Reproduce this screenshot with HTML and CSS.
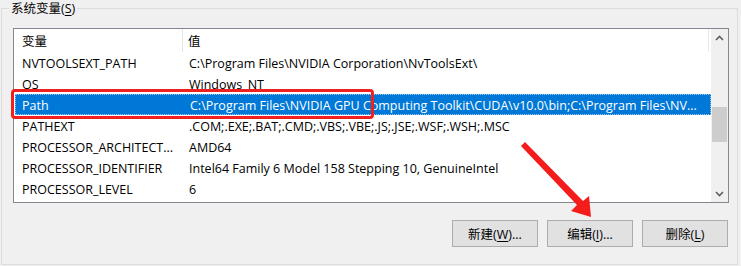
FILE: index.html
```html
<!DOCTYPE html>
<html lang="zh-CN">
<head>
    <meta charset="UTF-8">
    <title>系统变量</title>
    <link rel="stylesheet" href="styles.css">
</head>
<body>
    <div class="group">
        <span class="group-title">系统变量(<u>S</u>)</span>

        <div class="list">
            <div class="list-body">
                <div class="row head">
                    <div class="cell name">变量</div>
                    <div class="cell value">值</div>
                </div>
                <div class="row">
                    <div class="cell name">NVTOOLSEXT_PATH</div>
                    <div class="cell value">C:\Program Files\NVIDIA Corporation\NvToolsExt\</div>
                </div>
                <div class="row">
                    <div class="cell name">OS</div>
                    <div class="cell value">Windows_NT</div>
                </div>
                <div class="row selected">
                    <div class="cell name">Path</div>
                    <div class="cell value">C:\Program Files\NVIDIA GPU Computing Toolkit\CUDA\v10.0\bin;C:\Program Files\NV...</div>
                </div>
                <div class="row">
                    <div class="cell name">PATHEXT</div>
                    <div class="cell value">.COM;.EXE;.BAT;.CMD;.VBS;.VBE;.JS;.JSE;.WSF;.WSH;.MSC</div>
                </div>
                <div class="row">
                    <div class="cell name">PROCESSOR_ARCHITECT...</div>
                    <div class="cell value">AMD64</div>
                </div>
                <div class="row">
                    <div class="cell name">PROCESSOR_IDENTIFIER</div>
                    <div class="cell value">Intel64 Family 6 Model 158 Stepping 10, GenuineIntel</div>
                </div>
                <div class="row">
                    <div class="cell name">PROCESSOR_LEVEL</div>
                    <div class="cell value">6</div>
                </div>
            </div>
            <div class="scrollbar">
                <div class="sb-btn">
                    <svg width="9" height="6" viewBox="0 0 9 6"><path d="M1 5 L4.5 1.5 L8 5" fill="none" stroke="#606060" stroke-width="1.6"/></svg>
                </div>
                <div class="sb-track">
                    <div class="sb-thumb"></div>
                </div>
                <div class="sb-btn">
                    <svg width="9" height="6" viewBox="0 0 9 6"><path d="M1 1 L4.5 4.5 L8 1" fill="none" stroke="#606060" stroke-width="1.6"/></svg>
                </div>
            </div>
        </div>

        <div class="buttons">
            <button class="btn">新建(<u>W</u>)...</button>
            <button class="btn">编辑(<u>I</u>)...</button>
            <button class="btn">删除(<u>L</u>)</button>
        </div>
    </div>

    <!-- annotations drawn over the dialog -->
    <div class="mark-box"></div>
    <svg class="mark-arrow" width="741" height="266" viewBox="0 0 741 266">
        <path d="M521 146 L525 142 L583 201 L589 196 L591 217 L571 211 L577 205 Z" fill="#f51c1c"/>
    </svg>
</body>
</html>
```

FILE: styles.css
```css
* {
    margin: 0;
    padding: 0;
    box-sizing: border-box;
}

body {
    width: 741px;
    height: 266px;
    overflow: hidden;
    position: relative;
    background: #f0f0f0;
    font-family: "Open Sans", "Noto Sans CJK SC", sans-serif;
    font-size: 12.5px;
    color: #000;
}

u {
    text-decoration: underline;
    text-underline-offset: 2px;
}

.group {
    position: relative;
    margin: 8px 0 0 1px;
    width: 737px;
    height: 257px;
    border: 1px solid #dcdcdc;
    padding: 19px 8px 0 11px;
}

.group-title {
    position: absolute;
    top: -8px;
    left: 7px;
    padding: 0 2px;
    background: #f0f0f0;
    line-height: 15px;
}

.list {
    display: flex;
    width: 716px;
    height: 175px;
    border: 1px solid #828790;
    background: #fff;
}

.list-body {
    flex: 1;
    overflow: hidden;
}

.row {
    display: grid;
    grid-template-columns: 169px 526px;
    height: 21px;
    align-items: center;
    white-space: nowrap;
}

.row.head {
    height: 23px;
}

.row.head .cell {
    height: 23px;
    line-height: 23px;
    padding-top: 1px;
}

.row.head .cell:first-child {
    border-right: 1px solid #e5e5e5;
}

.row.head .cell.value {
    border-right: 1px solid #e5e5e5;
    padding-left: 5px;
}

.cell {
    overflow: hidden;
    height: 21px;
    line-height: 21px;
    padding-top: 1px;
}

.cell.name {
    padding-left: 8px;
    padding-right: 6px;
}

.cell.value {
    padding-left: 6px;
    padding-right: 6px;
}

.row.selected {
    background: #0078d7;
    color: #fff;
    margin-left: 1px;
    outline: 1px dotted #9cc8ee;
    outline-offset: -1px;
}

.row.selected .cell.name {
    padding-left: 7px;
}

.scrollbar {
    width: 17px;
    display: flex;
    flex-direction: column;
    background: #f0f0f0;
}

.sb-btn {
    height: 17px;
    display: flex;
    align-items: center;
    justify-content: center;
}

.sb-track {
    flex: 1;
    padding: 61px 1px 0;
}

.sb-thumb {
    height: 35px;
    background: #cdcdcd;
}

.buttons {
    display: flex;
    justify-content: flex-end;
    gap: 9px;
    margin-top: 17px;
    margin-right: 1px;
}

.btn {
    width: 86px;
    height: 27px;
    border: 1px solid #adadad;
    background: #e1e1e1;
    font-family: "Open Sans", "Noto Sans CJK SC", sans-serif;
    font-size: 12.5px;
    color: #000;
}

.mark-box {
    position: absolute;
    left: 11px;
    top: 89px;
    width: 363px;
    height: 30px;
    border: 3px solid #ee2020;
    border-radius: 4px;
}

.mark-arrow {
    position: absolute;
    left: 0;
    top: 0;
    pointer-events: none;
}
```
